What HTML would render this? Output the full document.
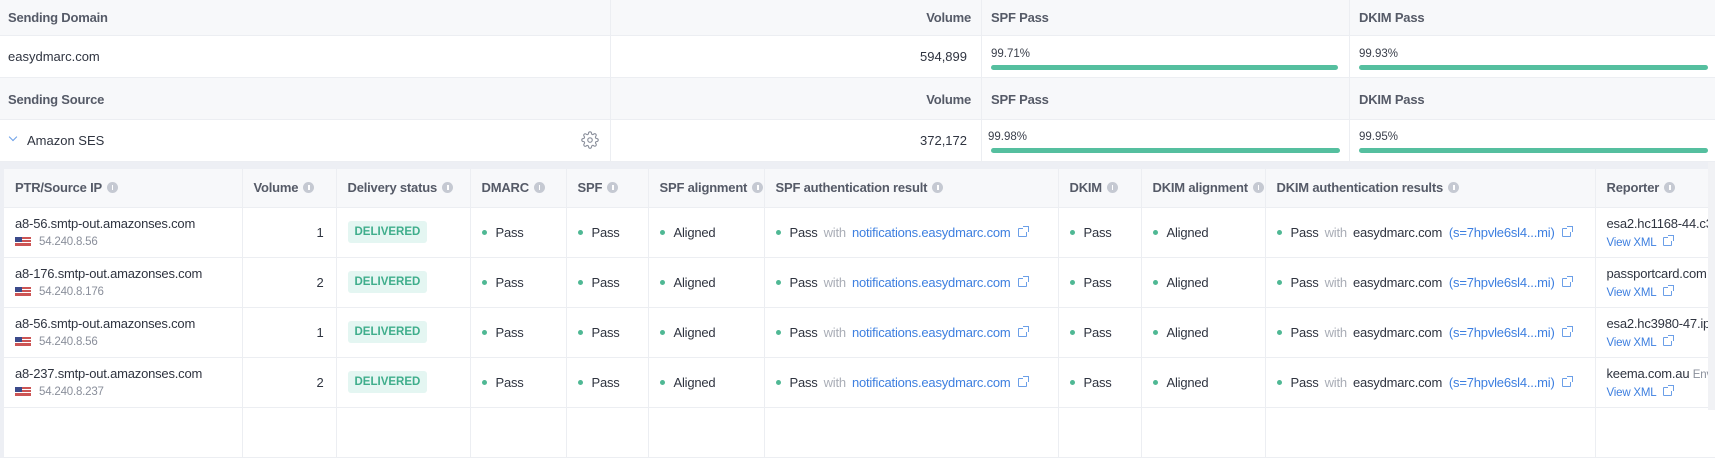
<!DOCTYPE html>
<html><head><meta charset="utf-8"><style>
*{box-sizing:border-box;margin:0;padding:0}
body{width:1715px;height:410px;overflow:hidden;background:#edeff4;font-family:"Liberation Sans",sans-serif;color:#2f3440;position:relative}
.a{position:absolute}
.hdr{background:#f7f8fa;border-bottom:1px solid #eceef2}
.row{background:#fff;border-bottom:1px solid #eceef2}
.th{font-size:13px;font-weight:bold;color:#555a67;letter-spacing:-0.2px}
.vl{position:absolute;top:0;bottom:0;width:1px;background:#eceef2}
.bar{position:absolute;height:5px;border-radius:3px;background:#55bf9f}
.pct{position:absolute;font-size:11.5px;color:#3a3f4b}
table{position:absolute;left:4px;top:169px;border-collapse:collapse;table-layout:fixed;background:#fff;width:1720px}
td,th{border-right:1px solid #eceef2;border-bottom:1px solid #eceef2;padding:0 0 0 11px;white-space:nowrap;overflow:hidden;font-size:13px;text-align:left;letter-spacing:-0.2px}
th{height:38px;background:#f7f8fa;font-weight:bold;color:#555a67}
td{height:50px;color:#2f3440}
.i{display:inline-block;width:11px;height:11px;border-radius:50%;background:#c5c9d2;vertical-align:-1px;margin-left:5px;position:relative}
.i:after{content:"";position:absolute;left:5px;top:3px;width:1.5px;height:5px;background:#fff}
.d{display:inline-block;width:5px;height:5px;border-radius:50%;background:#4fb894;vertical-align:2px;margin-right:9px}
.badge{display:inline-block;background:#e4f6f2;color:#3fae8c;font-size:11.5px;font-weight:bold;padding:5px 7px;border-radius:3px;letter-spacing:0}
.ip{font-size:11.5px;color:#8a8f9b;margin-top:5px}
.flag{display:inline-block;width:16px;height:9px;background:linear-gradient(#c55 0 2px,#fff 2px 3px,#c55 3px 5px,#fff 5px 6px,#c55 6px);margin-right:8px;position:relative;vertical-align:-1px}
.flag:before{content:"";position:absolute;left:0;top:0;width:7px;height:5px;background:#3b4a8a}
.w{color:#a9adb6;margin:0 6px 0 6px}
.lk{color:#3d7fe0}
.ex{display:inline-block;width:9px;height:9px;border:1.3px solid #6b9fe8;border-radius:1px;margin-left:7px;vertical-align:0;position:relative}
.ex:after{content:"";position:absolute;right:-3px;top:-3px;width:5px;height:5px;border-top:1.3px solid #6b9fe8;border-right:1.3px solid #6b9fe8;background:#fff}
.vx{font-size:11.5px;margin-top:6px}
.sb{position:absolute;right:0;top:162px;width:7px;height:248px;background:#f1f2f5}
</style></head><body>
<div class="a hdr" style="left:0;top:0;width:1715px;height:36px"></div>
<div class="a row" style="left:0;top:36px;width:1715px;height:42px"></div>
<div class="a hdr" style="left:0;top:78px;width:1715px;height:42px"></div>
<div class="a row" style="left:0;top:120px;width:1715px;height:42px"></div>
<div class="vl" style="left:610px;top:0;height:162px"></div>
<div class="vl" style="left:981px;top:0;height:162px"></div>
<div class="vl" style="left:1349px;top:0;height:162px"></div>

<div class="a th" style="left:8px;top:10px">Sending Domain</div>
<div class="a th" style="left:892px;top:10px;width:79px;text-align:right">Volume</div>
<div class="a th" style="left:991px;top:10px">SPF Pass</div>
<div class="a th" style="left:1359px;top:10px">DKIM Pass</div>
<div class="a" style="left:8px;top:49px;font-size:13px">easydmarc.com</div>
<div class="a" style="left:860px;top:49px;width:107px;text-align:right;font-size:13px">594,899</div>
<div class="pct" style="left:991px;top:48px">99.71%</div>
<div class="bar" style="left:991px;top:65px;width:347px"></div>
<div class="pct" style="left:1359px;top:48px">99.93%</div>
<div class="bar" style="left:1359px;top:65px;width:349px"></div>

<div class="a th" style="left:8px;top:92px">Sending Source</div>
<div class="a th" style="left:892px;top:92px;width:79px;text-align:right">Volume</div>
<div class="a th" style="left:991px;top:92px">SPF Pass</div>
<div class="a th" style="left:1359px;top:92px">DKIM Pass</div>
<div class="a" style="left:10px;top:134px;width:6px;height:6px;border-right:1.2px solid #6b9fe8;border-bottom:1.2px solid #6b9fe8;transform:rotate(45deg)"></div>
<div class="a" style="left:27px;top:133px;font-size:13px">Amazon SES</div>
<svg class="a" style="left:581px;top:131px" width="18" height="18" viewBox="0 0 24 24" fill="none" stroke="#8a8f9b" stroke-width="1.5"><circle cx="12" cy="12" r="3"/><path d="M19.4 15a1.65 1.65 0 0 0 .33 1.82l.06.06a2 2 0 1 1-2.830 2.83l-.06-.06a1.65 1.65 0 0 0-1.82-.33 1.65 1.65 0 0 0-1 1.51V21a2 2 0 1 1-4 0v-.09A1.65 1.65 0 0 0 9 19.4a1.65 1.65 0 0 0-1.82.33l-.06.06a2 2 0 1 1-2.83-2.83l.06-.06A1.65 1.65 0 0 0 4.68 15a1.65 1.65 0 0 0-1.51-1H3a2 2 0 1 1 0-4h.09A1.65 1.65 0 0 0 4.6 9a1.65 1.65 0 0 0-.33-1.82l-.06-.06a2 2 0 1 1 2.83-2.830l.06.06A1.65 1.65 0 0 0 9 4.68a1.65 1.65 0 0 0 1-1.51V3a2 2 0 1 1 4 0v.09a1.65 1.65 0 0 0 1 1.51 1.65 1.65 0 0 0 1.82-.33l.06-.06a2 2 0 1 1 2.83 2.83l-.06.06A1.65 1.65 0 0 0 19.4 9a1.65 1.65 0 0 0 1.51 1H21a2 2 0 1 1 0 4h-.09a1.65 1.65 0 0 0-1.51 1z"/></svg>
<div class="a" style="left:860px;top:133px;width:107px;text-align:right;font-size:13px">372,172</div>
<div class="pct" style="left:988px;top:131px">99.98%</div>
<div class="bar" style="left:991px;top:148px;width:349px"></div>
<div class="pct" style="left:1359px;top:131px">99.95%</div>
<div class="bar" style="left:1359px;top:148px;width:349px"></div>

<table>
<colgroup><col style="width:238px"><col style="width:94px"><col style="width:134px"><col style="width:96px"><col style="width:82px"><col style="width:116px"><col style="width:294px"><col style="width:83px"><col style="width:124px"><col style="width:330px"><col style="width:129px"></colgroup>
<tr><th>PTR/Source IP<span class="i"></span></th><th>Volume<span class="i"></span></th><th>Delivery status<span class="i"></span></th><th>DMARC<span class="i"></span></th><th>SPF<span class="i"></span></th><th>SPF alignment<span class="i"></span></th><th>SPF authentication result<span class="i"></span></th><th>DKIM<span class="i"></span></th><th>DKIM alignment<span class="i"></span></th><th>DKIM authentication results<span class="i"></span></th><th>Reporter<span class="i"></span></th></tr>
<tr><td><div>a8-56.smtp-out.amazonses.com</div><div class="ip"><span class="flag"></span>54.240.8.56</div></td><td style="text-align:right;padding-right:12px">1</td><td><span class="badge">DELIVERED</span></td><td><span class="d"></span>Pass</td><td><span class="d"></span>Pass</td><td><span class="d"></span>Aligned</td><td><span class="d"></span>Pass<span class="w">with</span><span class="lk">notifications.easydmarc.com</span><span class="ex"></span></td><td><span class="d"></span>Pass</td><td><span class="d"></span>Aligned</td><td><span class="d"></span>Pass<span class="w">with</span>easydmarc.com <span class="lk">&nbsp;(s=7hpvle6sl4...mi)</span><span class="ex"></span></td><td><div>esa2.hc1168-44.c3s2.iphmx.com</div><div class="vx lk">View XML<span class="ex"></span></div></td></tr>
<tr><td><div>a8-176.smtp-out.amazonses.com</div><div class="ip"><span class="flag"></span>54.240.8.176</div></td><td style="text-align:right;padding-right:12px">2</td><td><span class="badge">DELIVERED</span></td><td><span class="d"></span>Pass</td><td><span class="d"></span>Pass</td><td><span class="d"></span>Aligned</td><td><span class="d"></span>Pass<span class="w">with</span><span class="lk">notifications.easydmarc.com</span><span class="ex"></span></td><td><span class="d"></span>Pass</td><td><span class="d"></span>Aligned</td><td><span class="d"></span>Pass<span class="w">with</span>easydmarc.com <span class="lk">&nbsp;(s=7hpvle6sl4...mi)</span><span class="ex"></span></td><td><div>passportcard.com</div><div class="vx lk">View XML<span class="ex"></span></div></td></tr>
<tr><td><div>a8-56.smtp-out.amazonses.com</div><div class="ip"><span class="flag"></span>54.240.8.56</div></td><td style="text-align:right;padding-right:12px">1</td><td><span class="badge">DELIVERED</span></td><td><span class="d"></span>Pass</td><td><span class="d"></span>Pass</td><td><span class="d"></span>Aligned</td><td><span class="d"></span>Pass<span class="w">with</span><span class="lk">notifications.easydmarc.com</span><span class="ex"></span></td><td><span class="d"></span>Pass</td><td><span class="d"></span>Aligned</td><td><span class="d"></span>Pass<span class="w">with</span>easydmarc.com <span class="lk">&nbsp;(s=7hpvle6sl4...mi)</span><span class="ex"></span></td><td><div>esa2.hc3980-47.iphmx.com</div><div class="vx lk">View XML<span class="ex"></span></div></td></tr>
<tr><td><div>a8-237.smtp-out.amazonses.com</div><div class="ip"><span class="flag"></span>54.240.8.237</div></td><td style="text-align:right;padding-right:12px">2</td><td><span class="badge">DELIVERED</span></td><td><span class="d"></span>Pass</td><td><span class="d"></span>Pass</td><td><span class="d"></span>Aligned</td><td><span class="d"></span>Pass<span class="w">with</span><span class="lk">notifications.easydmarc.com</span><span class="ex"></span></td><td><span class="d"></span>Pass</td><td><span class="d"></span>Aligned</td><td><span class="d"></span>Pass<span class="w">with</span>easydmarc.com <span class="lk">&nbsp;(s=7hpvle6sl4...mi)</span><span class="ex"></span></td><td><div>keema.com.au <span style="color:#8a8f9b;font-size:11.5px">Envelope</span></div><div class="vx lk">View XML<span class="ex"></span></div></td></tr>
<tr><td></td><td></td><td></td><td></td><td></td><td></td><td></td><td></td><td></td><td></td><td></td></tr>
</table>
<div class="sb"></div>
</body></html>
